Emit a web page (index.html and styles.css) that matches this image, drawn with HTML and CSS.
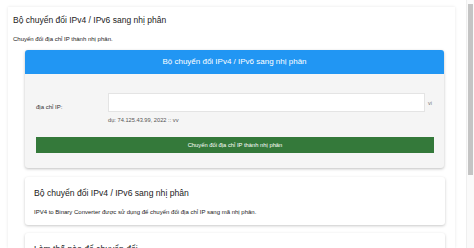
FILE: index.html
```html
<!DOCTYPE html>
<html lang="vi">
<head>
    <meta charset="UTF-8">
    <title>Bộ chuyển đổi IPv4 / IPv6 sang nhị phân</title>
    <link rel="stylesheet" href="styles.css">
</head>
<body>
    <div class="page">
        <div class="wrap">
            <h1 class="title">Bộ chuyển đổi IPv4 / IPv6 sang nhị phân</h1>
            <p class="lead">Chuyển đổi địa chỉ IP thành nhị phân.</p>

            <div class="tool">
                <div class="tool-head">Bộ chuyển đổi IPv4 / IPv6 sang nhị phân</div>
                <div class="tool-body">
                    <div class="row">
                        <label class="label" for="ip">địa chỉ IP:</label>
                        <div class="field">
                            <input id="ip" class="input" type="text">
                            <span class="lang">vi</span>
                        </div>
                    </div>
                    <div class="hint">dụ: 74.125.43.99, 2022 :: vv</div>
                    <button class="btn">Chuyển đổi địa chỉ IP thành nhị phân</button>
                </div>
            </div>

            <div class="card">
                <h2 class="card-title">Bộ chuyển đổi IPv4 / IPv6 sang nhị phân</h2>
                <p class="card-text">IPV4 to Binary Converter được sử dụng để chuyển đổi địa chỉ IP sang mã nhị phân.</p>
            </div>

            <div class="card">
                <h2 class="card-title">Làm thế nào để chuyển đổi</h2>
            </div>
        </div>
        <div class="scrollbar"><div class="thumb"></div></div>
    </div>
</body>
</html>
```

FILE: styles.css
```css
*{
    margin: 0;
    padding: 0;
    box-sizing: border-box;
}
body{
    font-family: "Liberation Sans", Arial, Helvetica, sans-serif;
    color: #222;
    background: #fff;
    overflow: hidden;
}
.page{
    display: flex;
    height: 248px;
}
.wrap{
    width: 447px;
    margin: 7px 0 0 8px;
    padding: 7px 0 0 5px;
    background: #fff;
    box-shadow: 0 0 3px rgba(0,0,0,0.1);
}
.title{
    font-size: 8.5px;
    font-weight: normal;
    line-height: 12px;
}
.lead{
    font-size: 6px;
    line-height: 8px;
    margin-top: 9px;
}
.tool{
    width: 419px;
    margin: 7px 0 0 12px;
    border-radius: 3px;
    box-shadow: 0 1px 3px rgba(0,0,0,0.25);
    background: #f5f5f5;
}
.tool-head{
    background: #2196f3;
    color: #fff;
    text-align: center;
    font-size: 8px;
    height: 24px;
    line-height: 24px;
    border-radius: 3px 3px 0 0;
}
.tool-body{
    padding: 19px 10px 15px 11px;
}
.row{
    display: flex;
    align-items: flex-end;
}
.label{
    width: 72px;
    font-size: 6px;
    line-height: 8px;
    padding-bottom: 1px;
    color: #333;
}
.field{
    display: flex;
    align-items: center;
    flex: 1;
}
.input{
    width: 317px;
    height: 19px;
    border: 1px solid #e4e4e4;
    background: #fff;
    outline: none;
}
.lang{
    font-size: 5.5px;
    color: #777;
    margin-left: 3px;
}
.hint{
    margin: 4px 0 0 72px;
    font-size: 5.7px;
    line-height: 8px;
    color: #555;
}
.btn{
    display: block;
    width: 398px;
    height: 16px;
    margin-top: 13px;
    border: 0;
    background: #34793a;
    color: #fff;
    font-family: "Liberation Sans", Arial, sans-serif;
    font-size: 5.8px;
    cursor: pointer;
}
.card{
    width: 420px;
    margin: 9px 0 0 12px;
    padding: 10px 9px 9px;
    background: #fff;
    border-radius: 3px;
    box-shadow: 0 1px 3px rgba(0,0,0,0.22);
}
.card + .card{
    margin-top: 8px;
}
.card-title{
    font-size: 8.6px;
    font-weight: normal;
    line-height: 12px;
}
.card-text{
    font-size: 6px;
    line-height: 8px;
    margin-top: 9px;
}
.scrollbar{
    width: 8px;
    margin-left: 11px;
    padding: 4px 1px 0;
    background: #fafafa;
    border-left: 1px solid #efefef;
}
.thumb{
    height: 171px;
    background: #c4c4c4;
}
```
